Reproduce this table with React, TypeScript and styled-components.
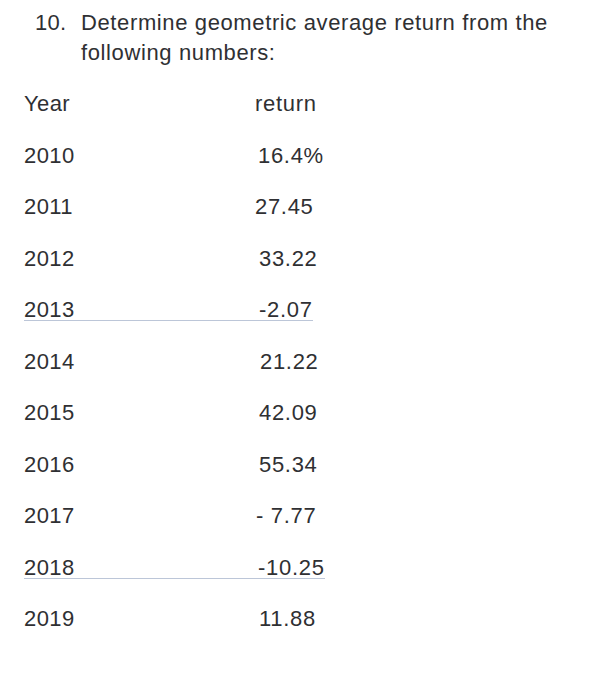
import React from "react";
import styled, { createGlobalStyle } from "styled-components";

interface Row {
    year: string;
    value: string;
    offset: number;
    underlined?: boolean;
}

const rows: Row[] = [
    { year: "2010", value: "16.4%", offset: 3 },
    { year: "2011", value: "27.45", offset: 0 },
    { year: "2012", value: "33.22", offset: 4 },
    { year: "2013", value: "-2.07", offset: 4, underlined: true },
    { year: "2014", value: "21.22", offset: 5 },
    { year: "2015", value: "42.09", offset: 4 },
    { year: "2016", value: "55.34", offset: 4 },
    { year: "2017", value: "- 7.77", offset: 1 },
    { year: "2018", value: "-10.25", offset: 3, underlined: true },
    { year: "2019", value: "11.88", offset: 4 },
];

const GlobalStyle = createGlobalStyle`
  html, body {
    margin: 0;
    padding: 0;
    background: #ffffff;
  }
  body {
    font-family: "Liberation Sans", Arial, sans-serif;
    color: #2f3033;
  }
`;

const App: React.FC = () => {
    return (
        <Page>
            <GlobalStyle />
            <Question>
                <Number>10.</Number>
                <QuestionText>Determine geometric average return from the following numbers:</QuestionText>
            </Question>
            <Table>
                <TableRow>
                    <RowLine>
                        <YearCell>Year</YearCell>
                        <ValueCell $offset={0}>return</ValueCell>
                    </RowLine>
                </TableRow>
                {rows.map((row) => (
                    <TableRow key={row.year}>
                        <RowLine $underlined={row.underlined}>
                            <YearCell>{row.year}</YearCell>
                            <ValueCell $offset={row.offset}>{row.value}</ValueCell>
                        </RowLine>
                    </TableRow>
                ))}
            </Table>
        </Page>
    );
};

const Page = styled.div`
  width: 613px;
  height: 700px;
  padding: 8px 0 0 0;
  box-sizing: border-box;
`;

const Question = styled.div`
  display: flex;
  padding-left: 35px;
  font-size: 22px;
  line-height: 30px;
`;

const Number = styled.span`
  width: 46px;
  flex-shrink: 0;
  letter-spacing: 0.3px;
`;

const QuestionText = styled.span`
  width: 500px;
  letter-spacing: 0.62px;
`;

const Table = styled.div`
  margin-top: 26px;
  padding-left: 24px;
  display: flex;
  flex-direction: column;
`;

const TableRow = styled.div`
  height: 51.5px;
  font-size: 22px;
  line-height: 20px;
`;

const RowLine = styled.div<{ $underlined?: boolean }>`
  display: inline-flex;
  border-bottom: 1px solid ${({ $underlined }) => ($underlined ? "#bcc6d8" : "transparent")};
`;

const YearCell = styled.span`
  width: 231px;
  letter-spacing: 0.4px;
`;

const ValueCell = styled.span<{ $offset: number }>`
  padding-left: ${({ $offset }) => $offset}px;
  letter-spacing: 0.7px;
`;

export default App;
